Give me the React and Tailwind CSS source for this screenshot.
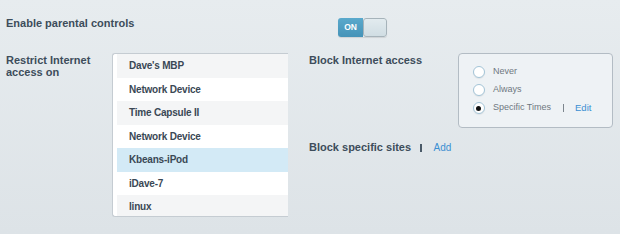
const devices = [
  { name: "Dave's MBP", bg: 'bg-[#f4f5f6]' },
  { name: 'Network Device', bg: 'bg-white' },
  { name: 'Time Capsule II', bg: 'bg-[#f4f5f6]' },
  { name: 'Network Device', bg: 'bg-white' },
  { name: 'Kbeans-iPod', bg: 'bg-[#d3eaf6]' },
  { name: 'iDave-7', bg: 'bg-white' },
  { name: 'linux', bg: 'bg-[#f4f5f6]' },
]

function Radio({ checked, label, children }) {
  return (
    <div className="flex h-[18px] items-center">
      <span className="-ml-[0.5px] flex h-[12px] w-[12px] items-center justify-center rounded-full border-[1.5px] border-[#a3c4d7] bg-white shadow-[0_1px_1px_rgba(0,0,0,0.06)]">
        {checked && <span className="h-[5px] w-[5px] rounded-full bg-[#111]" />}
      </span>
      <span className="ml-[8.5px] text-[9px] text-[#6e7881]">{label}</span>
      {children}
    </div>
  )
}

export default function App() {
  return (
    <div
      className="h-[234px] w-[620px] overflow-hidden bg-gradient-to-b from-[#e7ecef] to-[#dde3e7] pl-[6px] text-[#3d4d5b]"
      style={{ fontFamily: '"Liberation Sans", Arial, sans-serif' }}
    >
      <div className="flex items-start pt-[16px]">
        <span className="w-[332px] pt-[0.5px] text-[11px] font-bold leading-[13px]">Enable parental controls</span>
        <div className="mt-[2px] flex h-[19px] w-[49px] overflow-hidden rounded-[3px] shadow-[0_1px_1px_rgba(0,0,0,0.1)]">
          <div className="flex w-[25px] items-center justify-center bg-gradient-to-b from-[#5aa9cc] to-[#4593b8] text-[8.5px] font-bold text-white">
            ON
          </div>
          <div className="flex-1 rounded-[3px] border border-[#a6b3ba] bg-gradient-to-b from-[#e2ebef] to-[#d0dde3]" />
        </div>
      </div>

      <div className="mt-[16px] flex items-start">
        <div className="w-[106px] pt-[0.5px] text-[11px] font-bold leading-[12px]">
          Restrict Internet
          <br />
          access on
        </div>
        <div className="h-[164px] w-[176px] overflow-hidden rounded-l-[3px] border-y border-l border-[#c5ccd2] bg-white pl-[4px]">
          {devices.map((d, i) => (
            <div
              key={i}
              className={`flex h-[23.5px] items-center pl-[12px] text-[10px] font-bold tracking-[-0.02em] text-[#3a4855] ${d.bg}`}
            >
              {d.name}
            </div>
          ))}
        </div>

        <div className="ml-[21px] flex flex-col">
          <div className="flex items-start">
            <span className="w-[149px] pt-[0.5px] text-[11px] font-bold leading-[12px]">Block Internet access</span>
            <div className="h-[75px] w-[155px] rounded-[4px] border border-[#b3bcc4] bg-[#eef2f5] pl-[14px] pt-[9px]">
              <Radio label="Never" />
              <Radio label="Always" />
              <Radio checked label="Specific Times">
                <span className="ml-[12px] h-[8px] w-[1px] bg-[#7c858d]" />
                <span className="ml-[11px] text-[9.5px] text-[#3b8fd2]">Edit</span>
              </Radio>
            </div>
          </div>
          <div className="mt-[12px] flex items-center">
            <span className="text-[11px] font-bold leading-[13px]">Block specific sites</span>
            <span className="ml-[9px] h-[8px] w-[1.5px] bg-[#4a5a68]" />
            <span className="ml-[12px] text-[10px] text-[#3b8fd2]">Add</span>
          </div>
        </div>
      </div>
    </div>
  )
}
